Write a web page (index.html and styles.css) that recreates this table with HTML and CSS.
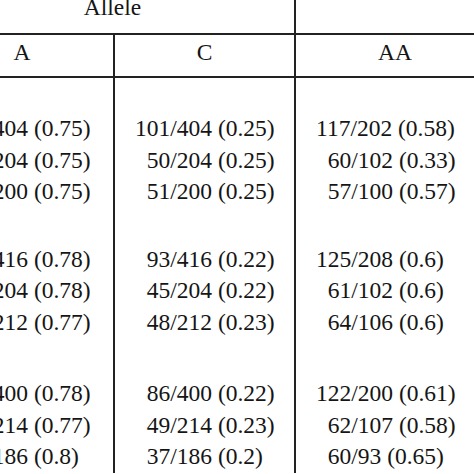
FILE: index.html
```html
<!DOCTYPE html>
<html lang="en">
<head>
<meta charset="utf-8">
<title>Allele and genotype frequencies</title>
<link rel="stylesheet" href="styles.css">
</head>
<body>
<table class="freq-table">
  <colgroup>
    <col class="col-a">
    <col class="col-c">
    <col class="col-aa">
  </colgroup>
  <thead>
    <tr class="head-top">
      <th colspan="2" class="cell-allele">Allele</th>
      <th class="cell-genotype"></th>
    </tr>
    <tr class="head-sub">
      <th>A</th>
      <th>C</th>
      <th>AA</th>
    </tr>
  </thead>
  <tbody>
    <tr class="gap gap-1"><td></td><td></td><td></td></tr>
    <tr class="row"><td>303/404 (0.75)</td><td>101/404 (0.25)</td><td>117/202 (0.58)</td></tr>
    <tr class="row"><td>154/204 (0.75)</td><td><span class="fig">0</span>50/204 (0.25)</td><td><span class="fig">0</span>60/102 (0.33)</td></tr>
    <tr class="row"><td>149/200 (0.75)</td><td><span class="fig">0</span>51/200 (0.25)</td><td><span class="fig">0</span>57/100 (0.57)</td></tr>

    <tr class="gap gap-2"><td></td><td></td><td></td></tr>
    <tr class="row"><td>323/416 (0.78)</td><td><span class="fig">0</span>93/416 (0.22)</td><td>125/208 (0.6)</td></tr>
    <tr class="row"><td>159/204 (0.78)</td><td><span class="fig">0</span>45/204 (0.22)</td><td><span class="fig">0</span>61/102 (0.6)</td></tr>
    <tr class="row"><td>164/212 (0.77)</td><td><span class="fig">0</span>48/212 (0.23)</td><td><span class="fig">0</span>64/106 (0.6)</td></tr>

    <tr class="gap gap-3"><td></td><td></td><td></td></tr>
    <tr class="row"><td>314/400 (0.78)</td><td><span class="fig">0</span>86/400 (0.22)</td><td>122/200 (0.61)</td></tr>
    <tr class="row"><td>165/214 (0.77)</td><td><span class="fig">0</span>49/214 (0.23)</td><td><span class="fig">0</span>62/107 (0.58)</td></tr>
    <tr class="row"><td>149/186 (0.8)</td><td><span class="fig">0</span>37/186 (0.2)</td><td><span class="fig">0</span>60/93 (0.65)</td></tr>
  </tbody>
</table>
</body>
</html>
```

FILE: styles.css
```css
html, body {
  margin: 0;
  padding: 0;
  background: #ffffff;
}

body {
  width: 474px;
  height: 474px;
  overflow: hidden;
  color: #151515;
  font-family: "Liberation Serif", "Times New Roman", serif;
}

.freq-table {
  border-collapse: collapse;
  table-layout: fixed;
  width: 564px;
  margin-top: -4px;
  margin-left: -69px;
  font-size: 23.5px;
}

.col-a { width: 183px; }
.col-c { width: 181px; }
.col-aa { width: 200px; }

.freq-table th {
  font-weight: normal;
  text-align: center;
  white-space: nowrap;
}

.head-top th {
  vertical-align: bottom;
  line-height: 23.5px;
  padding: 0 0 13px 0;
  border-bottom: 2px solid #222;
}

.head-top .cell-allele {
  border-right: 2px solid #222;
}

.head-sub th {
  line-height: 23.5px;
  padding: 6px 0 12px 0;
  border-bottom: 2px solid #222;
  border-right: 2px solid #222;
}

.freq-table td {
  white-space: nowrap;
  overflow: hidden;
  text-align: left;
  border-right: 2px solid #222;
}

.row td {
  line-height: 31.5px;
  padding: 0 0 0 20px;
}

.gap td {
  padding: 0;
}

.gap-1 td { height: 35px; }
.gap-2 td { height: 36px; }
.gap-3 td { height: 40px; }

.fig {
  visibility: hidden;
}
```
